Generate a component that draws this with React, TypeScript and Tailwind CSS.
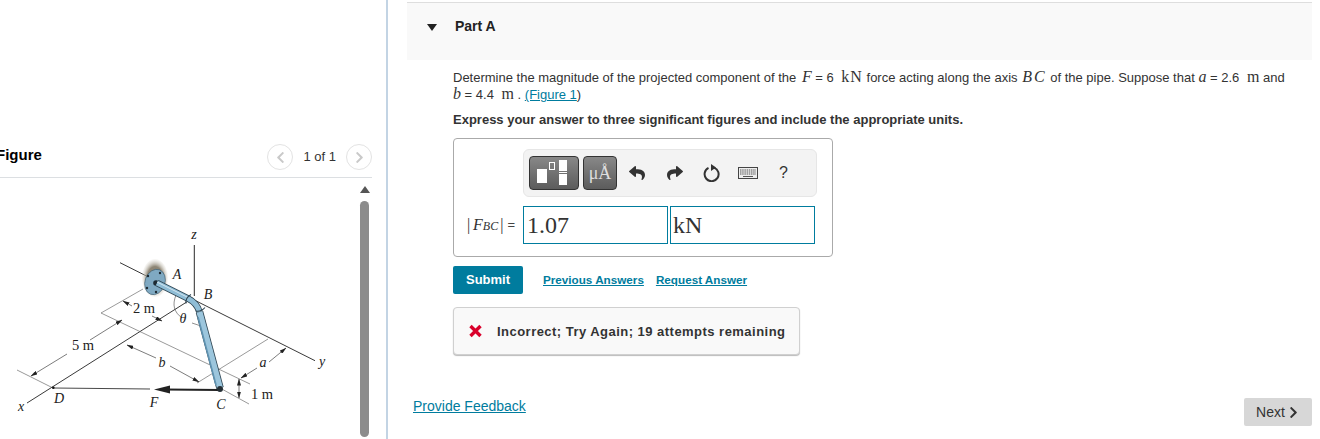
import { FaChevronLeft, FaChevronRight, FaReply, FaShare } from "react-icons/fa";

const sans = "font-['Liberation_Sans',Arial,sans-serif]";

const Dim = ({ d }: { d: string }) => (
  <path d={d} fill="none" stroke="#444" strokeWidth="0.7" markerEnd="url(#tip)" />
);

const Label = ({ x, y, children, italic = true, size = 14 }: { x: number; y: number; children: React.ReactNode; italic?: boolean; size?: number }) => (
  <text x={x} y={y} textAnchor="middle" fontFamily="'Liberation Serif', serif" fontStyle={italic ? "italic" : "normal"} fontSize={size} fill="#222">
    {children}
  </text>
);

const PipeFigure = () => (
  <svg className="block" width="358" height="261" viewBox="0 178 358 261">
    <defs>
      <marker id="tip" markerUnits="userSpaceOnUse" markerWidth="7" markerHeight="4" refX="6.5" refY="2" orient="auto">
        <path d="M0 0L7 2L0 4Z" fill="#222" />
      </marker>
      <radialGradient id="wall">
        <stop offset="0.6" stopColor="#8d8574" />
        <stop offset="1" stopColor="#d9d5cb" stopOpacity="0.15" />
      </radialGradient>
    </defs>
    {/* axes */}
    <path d="M194.3 245V296" stroke="#111" strokeWidth="0.9" />
    <path d="M120 262.7L315 360.7" stroke="#222" strokeWidth="0.9" />
    <path d="M27 403L193 298" stroke="#222" strokeWidth="0.9" />
    {/* thin construction lines */}
    <path d="M101 313L250 384M101 313L143 289M17 370L53 388M220 388L249 404M197 383L268 339" stroke="#555" strokeWidth="0.6" fill="none" />
    {/* dimensions */}
    <Dim d="M132 306L123 301" />
    <Dim d="M152 316L162 321" />
    <Dim d="M90 340L122 320" />
    <Dim d="M67 354L31 376" />
    <Dim d="M156 358L127 345" />
    <Dim d="M170 366L199 382" />
    <Dim d="M269 362L286 348" />
    <Dim d="M257 368L241 378" />
    <Dim d="M239 389V379" />
    <Dim d="M239 389V398" />
    <path d="M176 295C172 305 174 312 182 318M192 323L204 327" fill="none" stroke="#444" strokeWidth="0.6" />
    {/* force */}
    <path d="M53 388L150 389" stroke="#333" strokeWidth="0.9" />
    <path d="M220 390L165 389.5" stroke="#222" strokeWidth="2" />
    <path d="M154 389.5L170 385.5V393.5Z" fill="#222" />
    <circle cx="53.3" cy="387.7" r="1.3" fill="#111" />
    {/* wall plate */}
    <ellipse cx="155" cy="278" rx="13" ry="19" fill="url(#wall)" />
    <ellipse cx="155" cy="282" rx="10" ry="13" transform="rotate(20 155 282)" fill="#7fa9c2" stroke="#3b5a6c" strokeWidth="0.6" />
    <circle cx="160" cy="273" r="1.2" fill="#1d2a33" />
    <circle cx="148" cy="276" r="1.2" fill="#1d2a33" />
    <circle cx="147" cy="288" r="1.2" fill="#1d2a33" />
    <circle cx="156" cy="292" r="1.2" fill="#1d2a33" />
    <circle cx="156" cy="283" r="2.8" fill="#1d2a33" />
    {/* pipe */}
    <path d="M157 283L188 298.5Q197 303 199.5 312" fill="none" stroke="#2f4552" strokeWidth="6.6" />
    <path d="M157 283L188 298.5Q197 303 199.5 312" fill="none" stroke="#8fbdd6" strokeWidth="5" />
    <path d="M199.5 312L220 388" fill="none" stroke="#2f4552" strokeWidth="7.6" />
    <path d="M199.5 312L220 388" fill="none" stroke="#9cc6dd" strokeWidth="6" />
    <path d="M157 282L188 297.5" fill="none" stroke="#d4e6f0" strokeWidth="1" />
    <path d="M198 317L216 385" fill="none" stroke="#5f93b2" strokeWidth="1.6" />
    <path d="M191 294.5Q185 298 186 303.5M196 311Q201 312 205 307.5" fill="none" stroke="#2f4552" strokeWidth="1.1" />
    <circle cx="220" cy="389" r="3" fill="#252f35" />
    {/* labels */}
    <Label x={194} y={239}>z</Label>
    <Label x={322} y={366}>y</Label>
    <Label x={21} y={411}>x</Label>
    <Label x={59} y={403}>D</Label>
    <Label x={154} y={407}>F</Label>
    <Label x={221} y={409}>C</Label>
    <Label x={177} y={279}>A</Label>
    <Label x={208} y={299}>B</Label>
    <Label x={183} y={323}>θ</Label>
    <Label x={162} y={367}>b</Label>
    <Label x={263} y={367}>a</Label>
    <Label x={144} y={313} italic={false} size={14.5}>2 m</Label>
    <Label x={83} y={350} italic={false} size={14.5}>5 m</Label>
    <Label x={262} y={399} italic={false} size={14.5}>1 m</Label>
  </svg>
);

const RoundNav = ({ children }: { children: React.ReactNode }) => (
  <span className="flex h-[26px] w-[26px] items-center justify-center rounded-full border border-[#e3e3e3] text-[13px] text-[#c9c9c9]">
    {children}
  </span>
);

const FigurePanel = () => (
  <aside className={`${sans} w-[386px] shrink-0 pt-[144px] text-[#222]`}>
    <div className="mr-[14px] flex h-[34px] items-start border-b border-[#dcdfe2]">
      <h2 className="-ml-[4px] pt-[1px] text-[15px] font-bold leading-[20px] text-black">Figure</h2>
      <div className="ml-auto flex items-center">
        <RoundNav><FaChevronLeft /></RoundNav>
        <span className="mx-[10px] text-[13px] text-[#333]">1 of 1</span>
        <RoundNav><FaChevronRight /></RoundNav>
      </div>
    </div>
    <div className="flex h-[261px]">
      <PipeFigure />
      <div className="ml-[2px] flex w-[9px] flex-col items-center pt-[8px]">
        <span className="h-0 w-0 border-x-[5px] border-b-[7px] border-x-transparent border-b-[#555]" />
        <span className="mt-[8px] h-[236px] w-[9px] rounded-[5px] bg-[#8c8c8c]" />
      </div>
    </div>
  </aside>
);

const m = "font-['Liberation_Serif',serif] text-[16px] leading-[10px]";

const Toolbar = () => (
  <div className="ml-[69px] flex h-[48px] w-[294px] items-center rounded-[6px] border border-[#e6e6e6] bg-[#f3f3f3] pl-[5px] text-[#333]">
    <span className="h-[34px] w-[50px] rounded-[4px] border border-[#333] bg-gradient-to-b from-[#888] to-[#5c5c5c]">
      <svg className="block" width="48" height="32" viewBox="1 1 48 32">
        <rect x="8" y="13" width="10" height="14" fill="#fff" />
        <rect x="20.5" y="6.5" width="5" height="7" fill="none" stroke="#fff" />
        <rect x="30" y="4" width="8" height="11" fill="#fff" />
        <rect x="30" y="16" width="8" height="1" fill="#fff" />
        <rect x="30" y="18" width="8" height="11" fill="#fff" />
      </svg>
    </span>
    <span className="ml-[4px] flex h-[34px] w-[34px] items-center justify-center rounded-[4px] border border-[#333] bg-gradient-to-b from-[#888] to-[#5c5c5c] font-['Liberation_Serif',serif] text-[18px] text-[#dedede]">
      μÅ
    </span>
    <FaReply className="ml-[12px] text-[16px]" />
    <FaShare className="ml-[22px] text-[16px]" />
    <svg className="ml-[20px]" width="18" height="18" viewBox="0 0 18 18">
      <path d="M11 3.6A7 7 0 1 1 5.5 3.9" fill="none" stroke="#333" strokeWidth="2" />
      <path d="M8 0L13 3.6L8 7Z" fill="#333" />
    </svg>
    <svg className="ml-[17px]" width="20" height="12" viewBox="0 0 20 12">
      <rect x="0.5" y="0.5" width="19" height="11" fill="#eee" stroke="#444" />
      <path d="M2 3H18M2 5H18M2 7H18" stroke="#555" strokeDasharray="1.5 0.7" />
      <path d="M5 9.5H15" stroke="#555" />
    </svg>
    <span className="ml-[21px] text-[16px]">?</span>
  </div>
);

const AnswerBox = () => (
  <div className="mt-[10px] h-[119px] w-[380px] rounded-[4px] border border-[#aaa] pt-[10px]">
    <Toolbar />
    <div className="mt-[9px] flex items-center">
      <span className="flex w-[69px] items-center justify-end pr-[8px] text-[13px] text-[#444]">
        <span className="whitespace-nowrap font-['Liberation_Serif',serif] text-[16px] text-[#333]">
          |<i className="ml-[3px]">F</i><i className="text-[12px]">BC</i><span className="ml-[2px]">|</span>
        </span>
        <span className="ml-[4px]">=</span>
      </span>
      <div className="flex h-[38px] w-[145px] items-center border border-[#007c9e] px-[3px] font-['Liberation_Serif',serif] text-[24px] text-[#333]">1.07</div>
      <div className="ml-[2px] flex h-[38px] w-[145px] items-center border border-[#007c9e] px-[2px] font-['Liberation_Serif',serif] text-[24px] text-[#333]">kN</div>
    </div>
  </div>
);

const PartPanel = () => (
  <main className={`${sans} flex min-w-0 flex-1 flex-col border-l-2 border-[#c3d4e4] pl-[19px] pr-[8px] text-[#333]`}>
    <div className="mt-[2px] flex h-[58px] items-start border-t border-[#dedede] bg-[#f9f9f9] pl-[20px] pt-[15px]">
      <span className="mt-[6px] h-0 w-0 border-x-[5.5px] border-t-[7px] border-x-transparent border-t-[#222]" />
      <h3 className="ml-[18px] text-[14px] font-bold leading-[16px] text-[#222]">Part A</h3>
    </div>
    <div className="pl-[46px] pt-[9px]">
      <p className="text-[13px] leading-[17px]">
        Determine the magnitude of the projected component of the <i className={`${m} ml-[2px]`}>F</i> = 6 <span className={`${m} ml-[4px] tracking-[1px]`}>kN</span> force acting along the axis <i className={`${m} ml-[1px] tracking-[2px]`}>BC</i> of the pipe. Suppose that <i className={m}>a</i> = 2.6 <span className={`${m} ml-[4px]`}>m</span> and
        <br />
        <i className={m}>b</i> = 4.4 <span className={`${m} ml-[4px]`}>m</span> . <span className="text-[#007c9e] underline">(Figure 1</span>)
      </p>
      <p className="mt-[8px] text-[13px] font-bold leading-[17px] text-[#333]">
        Express your answer to three significant figures and include the appropriate units.
      </p>
      <AnswerBox />
      <div className="mt-[9px] flex items-center">
        <button className="h-[28px] w-[70px] rounded-[2px] bg-[#007c9e] text-[13px] font-bold text-white">Submit</button>
        <a className="ml-[20px] text-[11.7px] font-bold text-[#007c9e] underline">Previous Answers</a>
        <a className="ml-[12px] text-[11.7px] font-bold text-[#007c9e] underline">Request Answer</a>
      </div>
      <div className="mt-[13px] flex h-[48px] w-[347px] items-center rounded-[4px] border border-[#d0d0d0] bg-[#f9f9f9] pl-[14px] shadow-[0_1px_1px_#bbb]">
        <svg width="15" height="14" viewBox="0 0 15 14">
          <path d="M2.5 2L12.5 12M12.5 2L2.5 12" stroke="#d9002b" strokeWidth="3.4" />
        </svg>
        <span className="ml-[14px] pt-[1px] text-[13px] font-bold tracking-[0.47px] text-[#333]">Incorrect; Try Again; 19 attempts remaining</span>
      </div>
    </div>
    <div className="mt-[32px] flex items-start justify-between">
      <a className="ml-[6px] mt-[11px] text-[14px] leading-[16px] text-[#007c9e] underline">Provide Feedback</a>
      <button className="mt-[11px] flex h-[28px] w-[68px] items-center justify-center rounded-[2px] bg-[#d7d7d7] text-[14px] text-[#333]">
        Next <FaChevronRight className="ml-[2px] text-[13px]" />
      </button>
    </div>
  </main>
);

export default function App() {
  return (
    <div className="flex h-[439px] w-[1320px] overflow-hidden bg-white">
      <FigurePanel />
      <PartPanel />
    </div>
  );
}
